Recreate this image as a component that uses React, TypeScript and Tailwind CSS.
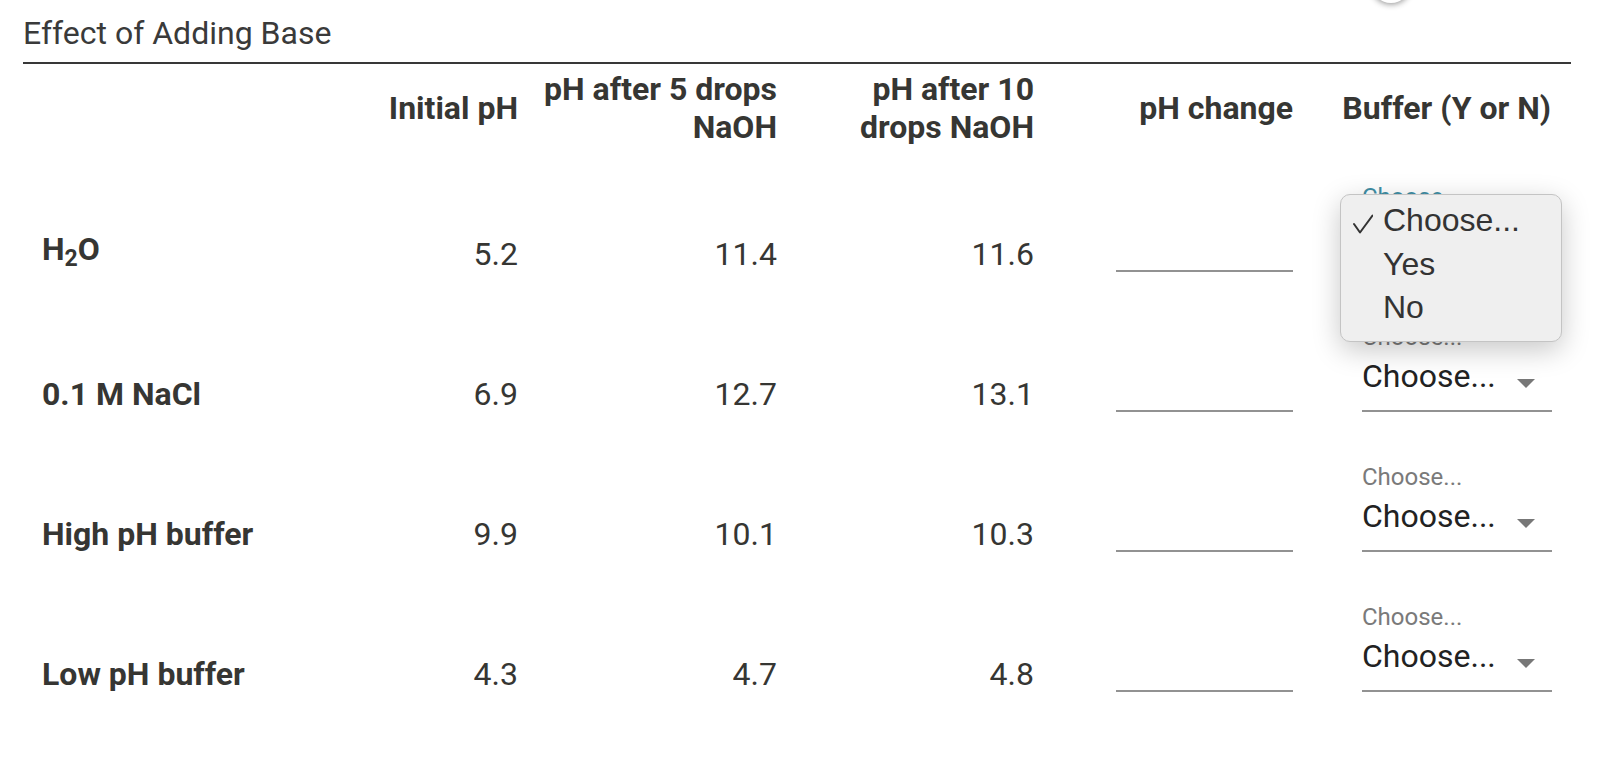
import React from "react";

const rows: { label: React.ReactNode; sub?: boolean; v: string[] }[] = [
  { label: (<>H<sub className="text-[0.72em]">2</sub>O</>), sub: true, v: ["5.2", "11.4", "11.6"] },
  { label: "0.1 M NaCl", v: ["6.9", "12.7", "13.1"] },
  { label: "High pH buffer", v: ["9.9", "10.1", "10.3"] },
  { label: "Low pH buffer", v: ["4.3", "4.7", "4.8"] },
];

function Caret() {
  return (
    <svg width="18" height="9" viewBox="0 0 18 9" className="mt-[22px] mr-[17px] shrink-0">
      <path d="M0 0 L18 0 L9 9 Z" fill="#777777" />
    </svg>
  );
}

function SelectField({ focused }: { focused?: boolean }) {
  return (
    <div className="w-[190px] mr-[19px]">
      <div className={`text-[24px] leading-[28px] ${focused ? "text-[#3f8ea5]" : "text-[#7a7a7a]"}`}>Choose...</div>
      <div className="mt-[6px] flex items-start justify-between border-b-2 border-[#929292] pb-[15px]">
        <span className="text-[32px] leading-[38px] text-[#222222]">Choose...</span>
        <Caret />
      </div>
    </div>
  );
}

export default function App() {
  return (
    <div className="relative h-[768px] w-full overflow-hidden bg-white font-['Roboto',sans-serif] text-[#363633]">
      <div className="absolute left-[1371px] top-[-37px] h-[40px] w-[40px] rounded-full bg-white shadow-[0_1px_6px_rgba(0,0,0,0.45)]" />

      <div className="ml-[23px] w-[1548px]">
        <div className="border-b-2 border-[#383838] pt-[13px] pb-[9px] text-[32px] leading-[40px] text-[#3a3a3a]">
          Effect of Adding Base
        </div>

        <div className="grid grid-cols-[367px_148px_259px_257px_259px_258px]">
          {/* header */}
          <div className="h-[88px]" />
          <div className="flex h-[88px] items-center justify-end whitespace-nowrap pr-[20px] text-right text-[32px] font-bold leading-[38px]">Initial pH</div>
          <div className="flex h-[88px] items-center justify-end whitespace-nowrap pr-[20px] text-right text-[32px] font-bold leading-[38px]">
            <span>pH after 5 drops<br />NaOH</span>
          </div>
          <div className="flex h-[88px] items-center justify-end whitespace-nowrap pr-[20px] text-right text-[32px] font-bold leading-[38px]">
            <span>pH after 10<br />drops NaOH</span>
          </div>
          <div className="flex h-[88px] items-center justify-end whitespace-nowrap pr-[20px] text-right text-[32px] font-bold leading-[38px]">pH change</div>
          <div className="flex h-[88px] items-center justify-end whitespace-nowrap pr-[20px] text-right text-[32px] font-bold leading-[38px]">Buffer (Y or N)</div>

          {rows.map((r, i) => (
            <React.Fragment key={i}>
              <div className={`flex h-[140px] items-end whitespace-nowrap pl-[19px] text-[32px] font-bold leading-[36px] ${r.sub ? "pb-[25px]" : "pb-[20px]"}`}>
                <span>{r.label}</span>
              </div>
              {r.v.map((v, j) => (
                <div key={j} className="flex h-[140px] items-end justify-end pb-[20px] pr-[20px] text-[32px] leading-[36px]">
                  {v}
                </div>
              ))}
              <div className="flex h-[140px] items-end justify-end pb-[20px] pr-[20px]">
                <div className="h-[40px] w-[177px] border-b-2 border-[#929292]" />
              </div>
              <div className="flex h-[140px] items-end justify-end pb-[20px]">
                <SelectField focused={i === 0} />
              </div>
            </React.Fragment>
          ))}
        </div>
      </div>

      {/* native select popup */}
      <div className="absolute left-[1340px] top-[194px] z-10 h-[148px] w-[222px] rounded-[10px] border border-[#c4c4c4] bg-[#efefef] pt-[4px] font-['Liberation_Sans',sans-serif] text-[32px] leading-[43.5px] text-[#333333] shadow-[0_8px_28px_rgba(0,0,0,0.22)]">
        <div className="flex items-center">
          <div className="w-[42px] pl-[12px]">
            <svg width="20" height="20" viewBox="0 0 20 20" className="mt-[6px]">
              <path d="M1 10 L7 18.5 L19.5 1.5" fill="none" stroke="#333333" strokeWidth="2" strokeLinejoin="round" strokeLinecap="round" />
            </svg>
          </div>
          <span>Choose...</span>
        </div>
        <div className="flex items-center">
          <div className="w-[42px]" />
          <span>Yes</span>
        </div>
        <div className="flex items-center">
          <div className="w-[42px]" />
          <span>No</span>
        </div>
      </div>
    </div>
  );
}
